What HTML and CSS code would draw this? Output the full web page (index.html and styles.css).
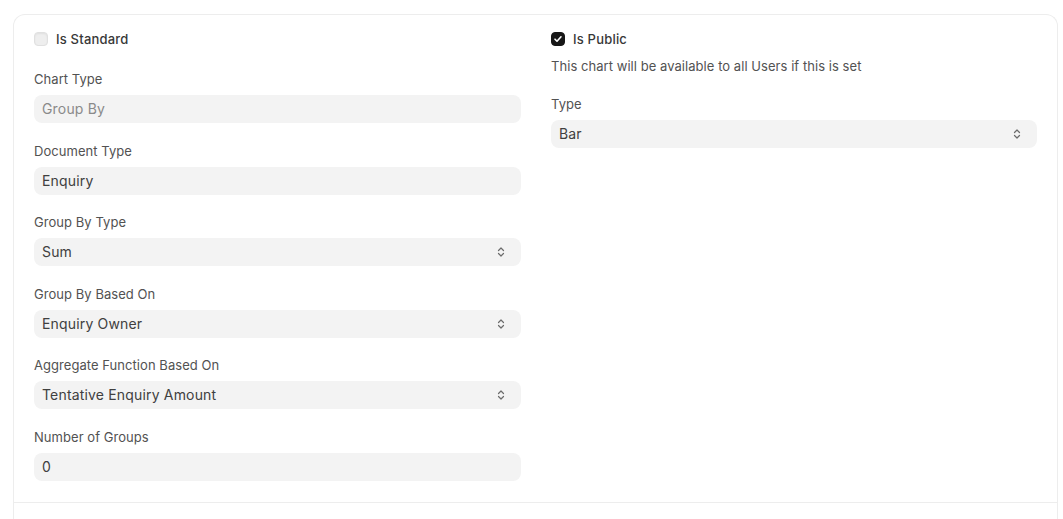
FILE: index.html
```html
<!DOCTYPE html>
<html>
<head>
<meta charset="utf-8">
<link rel="stylesheet" href="styles.css">
</head>
<body>
<div class="card">
  <div class="section">
    <div class="col">
      <div class="check-row">
        <span class="cb"></span>
        <span class="check-label">Is Standard</span>
      </div>
      <div class="field first">
        <div class="label">Chart Type</div>
        <div class="input muted">Group By</div>
      </div>
      <div class="field">
        <div class="label">Document Type</div>
        <div class="input">Enquiry</div>
      </div>
      <div class="field">
        <div class="label">Group By Type</div>
        <div class="input select">Sum<svg class="chev" viewBox="0 0 8 12" width="8" height="12"><path d="M1.5 4.5 L4 2 L6.5 4.5 M1.5 7.5 L4 10 L6.5 7.5" fill="none" stroke="#6b6b6b" stroke-width="1.2" stroke-linecap="round" stroke-linejoin="round"/></svg></div>
      </div>
      <div class="field">
        <div class="label">Group By Based On</div>
        <div class="input select">Enquiry Owner<svg class="chev" viewBox="0 0 8 12" width="8" height="12"><path d="M1.5 4.5 L4 2 L6.5 4.5 M1.5 7.5 L4 10 L6.5 7.5" fill="none" stroke="#6b6b6b" stroke-width="1.2" stroke-linecap="round" stroke-linejoin="round"/></svg></div>
      </div>
      <div class="field">
        <div class="label">Aggregate Function Based On</div>
        <div class="input select">Tentative Enquiry Amount<svg class="chev" viewBox="0 0 8 12" width="8" height="12"><path d="M1.5 4.5 L4 2 L6.5 4.5 M1.5 7.5 L4 10 L6.5 7.5" fill="none" stroke="#6b6b6b" stroke-width="1.2" stroke-linecap="round" stroke-linejoin="round"/></svg></div>
      </div>
      <div class="field last">
        <div class="label">Number of Groups</div>
        <div class="input">0</div>
      </div>
    </div>
    <div class="col">
      <div class="check-row">
        <span class="cb checked"><svg viewBox="0 0 14 14" width="14" height="14"><path d="M4 7.2 L6 9.2 L10 4.8" fill="none" stroke="#fff" stroke-width="1.6" stroke-linecap="round" stroke-linejoin="round"/></svg></span>
        <span class="check-label">Is Public</span>
      </div>
      <div class="desc">This chart will be available to all Users if this is set</div>
      <div class="field first">
        <div class="label">Type</div>
        <div class="input select">Bar<svg class="chev" viewBox="0 0 8 12" width="8" height="12"><path d="M1.5 4.5 L4 2 L6.5 4.5 M1.5 7.5 L4 10 L6.5 7.5" fill="none" stroke="#6b6b6b" stroke-width="1.2" stroke-linecap="round" stroke-linejoin="round"/></svg></div>
      </div>
    </div>
  </div>
  <div class="section-empty"></div>
</div>
</body>
</html>
```

FILE: styles.css
```css
* { box-sizing: border-box; }
html, body { margin: 0; padding: 0; background: #fff; }
body {
  font-family: Inter, "Noto Sans", sans-serif;
  color: #171717;
  padding: 14px 5px 0 13px;
  height: 519px;
  overflow: hidden;
}
.card {
  border: 1px solid #ededed;
  border-radius: 12px;
  height: 505px;
  border-bottom: none;
  border-bottom-left-radius: 0;
  border-bottom-right-radius: 0;
}
.section {
  display: grid;
  grid-template-columns: 487px 486px;
  column-gap: 30px;
  padding: 14px 20px 21.5px 20px;
  border-bottom: 1px solid #ededed;
}
.check-row {
  display: flex;
  align-items: center;
  height: 20px;
  gap: 8px;
}
.cb {
  width: 14px;
  height: 14px;
  border-radius: 4px;
  background: #eeeeee;
  border: 1px solid #e0e0e0;
  box-shadow: inset 0 1px 2px rgba(0,0,0,0.06);
  flex: none;
  display: flex;
}
.cb.checked {
  background: #171717;
  border-color: #171717;
  box-shadow: none;
}
.cb.checked svg { margin: -1px; }
.check-label {
  font-size: 13px;
  font-weight: 500;
  letter-spacing: 0.2px;
  color: #383838;
}
.desc {
  margin-top: 9px;
  font-size: 13px;
  letter-spacing: 0.05px;
  line-height: 16px;
  color: #525252;
}
.field { margin-bottom: 19.5px; }
.field.first { margin-top: 22px; }
.field.last { margin-bottom: 0; }
.label {
  font-size: 13px;
  letter-spacing: 0.05px;
  line-height: 16px;
  color: #525252;
  margin-bottom: 8px;
}
.input {
  height: 28px;
  border-radius: 8px;
  background: #f3f3f3;
  padding: 0 8px;
  font-size: 14px;
  letter-spacing: 0.17px;
  line-height: 28px;
  color: #404040;
  display: flex;
  align-items: center;
  justify-content: space-between;
}
.input.muted { color: #8a8a8a; }
.chev { margin-right: 8px; flex: none; }
```
